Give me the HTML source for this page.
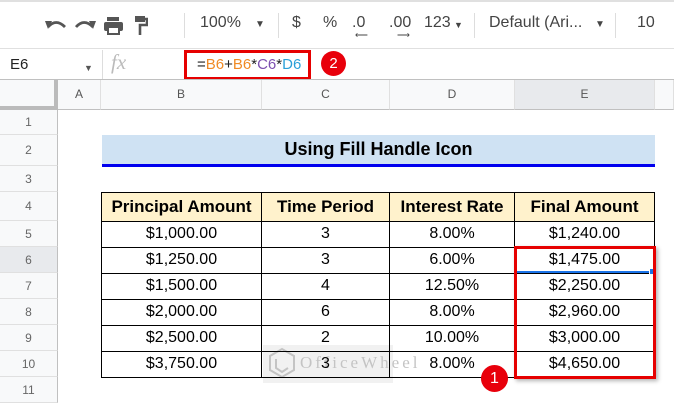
<!DOCTYPE html>
<html><head><meta charset="utf-8"><style>
*{margin:0;padding:0;box-sizing:border-box}
body{width:674px;height:403px;overflow:hidden;background:#fff;font-family:"Liberation Sans",Arial,sans-serif;position:relative}
.a{position:absolute}
.tb{color:#444;font-size:16px;top:14px}
.rh{position:absolute;left:0;width:58px;background:#f8f9fa;border-bottom:1px solid #e0e0e0;border-right:1px solid #c0c0c0;color:#666;font-size:12px;text-align:center}
.ch{position:absolute;top:80px;height:30px;background:#f8f9fa;border-right:1px solid #e0e0e0;border-bottom:1px solid #c0c0c0;color:#555;font-size:12px;text-align:center;line-height:29px}
.c{position:absolute;border-right:1.5px solid #000;border-bottom:1.5px solid #000;text-align:center;font-size:16px;color:#000;line-height:26px}
.hd{background:#fff2cc;font-weight:bold;font-size:17px;line-height:28px}
</style></head><body>
<div class="a" style="left:0;top:0;width:674px;height:2px;background:#e0e0e0"></div>
<!-- watermark (behind table) -->
<div class="a" style="left:263px;top:345px;width:130px;height:38px;background:rgba(235,235,235,0.7)"></div>
<svg class="a" style="left:268px;top:347px" width="28" height="32"><path d="M14 2 L26 9 L26 23 L14 30 L2 23 L2 9 Z" fill="none" stroke="#c4c4c4" stroke-width="2"/><path d="M8 12 L8 21 L14 25 L20 21" fill="none" stroke="#c4c4c4" stroke-width="2"/></svg>
<div class="a" style="left:300px;top:353px;font-size:17px;font-family:'Liberation Serif',serif;letter-spacing:3px;color:#c4c4c4">OfficeWheel</div>
<!-- toolbar -->
<svg class="a" style="left:44px;top:14px" width="104" height="24" viewBox="0 0 104 24">
<path d="M4 13 Q12 4 21 13" fill="none" stroke="#555" stroke-width="2.8"/><path d="M1 7 L8 7 L4 15 Z" fill="#555"/>
<path d="M32 13 Q40 4 49 13" fill="none" stroke="#555" stroke-width="2.8"/><path d="M52 7 L45 7 L49 15 Z" fill="#555"/>
<rect x="63" y="3" width="12" height="4" fill="#555"/><rect x="60" y="8" width="19" height="9" rx="2" fill="#555"/><rect x="64" y="13" width="11" height="7" fill="#fff" stroke="#555" stroke-width="2"/>
<rect x="91" y="2" width="10" height="6" fill="#555"/><path d="M101 5 L103 5 L103 11 L96 11 L96 21" fill="none" stroke="#555" stroke-width="2.6"/>
</svg>
<div class="a" style="left:184px;top:13px;width:1px;height:25px;background:#ddd"></div>
<div class="a tb" style="left:200px">100%</div>
<div class="a tb" style="left:255px;font-size:10px;top:19px">▼</div>
<div class="a" style="left:278px;top:13px;width:1px;height:25px;background:#ddd"></div>
<div class="a tb" style="left:292px">$</div>
<div class="a tb" style="left:323px">%</div>
<div class="a tb" style="left:352px">.0</div>
<div class="a" style="left:355px;top:30px;font-size:9px;color:#444">⟵</div>
<div class="a tb" style="left:389px">.00</div>
<div class="a" style="left:397px;top:30px;font-size:9px;color:#444">⟶</div>
<div class="a tb" style="left:424px">123</div>
<div class="a tb" style="left:454px;font-size:9px;top:20px">▼</div>
<div class="a" style="left:474px;top:13px;width:1px;height:25px;background:#ddd"></div>
<div class="a tb" style="left:489px">Default (Ari...</div>
<div class="a tb" style="left:595px;font-size:10px;top:19px">▼</div>
<div class="a" style="left:615px;top:13px;width:1px;height:25px;background:#ddd"></div>
<div class="a tb" style="left:637px">10</div>
<div class="a" style="left:0;top:48px;width:674px;height:1px;background:#e0e0e0"></div>
<!-- formula bar -->
<div class="a" style="left:10px;top:56px;font-size:15px;color:#222">E6</div>
<div class="a" style="left:84px;top:63px;font-size:9px;color:#555">▼</div>
<div class="a" style="left:102px;top:50px;width:1px;height:30px;background:#ddd"></div>
<div class="a" style="left:111px;top:50px;font-size:21px;font-style:italic;font-family:'Liberation Serif',serif;color:#bbb">fx</div>
<div class="a" style="left:184px;top:50px;width:127px;height:30px;border:3px solid #e60000"></div>
<div class="a" style="left:197px;top:56px;font-size:15px;color:#222">=<span style="color:#f08a24">B6</span>+<span style="color:#f08a24">B6</span>*<span style="color:#7c4fb0">C6</span>*<span style="color:#2aa0d8">D6</span></div>
<div class="a" style="left:321px;top:51px;width:25px;height:25px;border-radius:50%;background:#e8000b;color:#fff;font-size:15px;text-align:center;line-height:25px">2</div>
<div class="a" style="left:0;top:79px;width:674px;height:1px;background:#c0c0c0"></div>
<!-- headers -->
<div class="a" style="left:0;top:80px;width:58px;height:30px;background:#f8f9fa;border-right:4px solid #bbb;border-bottom:4px solid #bbb"></div>
<div class="ch" style="left:58px;width:43px">A</div>
<div class="ch" style="left:101px;width:161px">B</div>
<div class="ch" style="left:262px;width:128px">C</div>
<div class="ch" style="left:390px;width:125px">D</div>
<div class="ch" style="left:515px;width:140px;background:#e8eaed">E</div>
<div class="ch" style="left:655px;width:19px"></div>
<div class="rh" style="top:110px;height:25px;line-height:25px">1</div>
<div class="rh" style="top:135px;height:31px;line-height:31px">2</div>
<div class="rh" style="top:166px;height:26px;line-height:26px">3</div>
<div class="rh" style="top:192px;height:29px;line-height:29px">4</div>
<div class="rh" style="top:221px;height:26px;line-height:26px">5</div>
<div class="rh" style="top:247px;height:26px;line-height:26px;background:#e8eaed">6</div>
<div class="rh" style="top:273px;height:26px;line-height:26px">7</div>
<div class="rh" style="top:299px;height:26px;line-height:26px">8</div>
<div class="rh" style="top:325px;height:26px;line-height:26px">9</div>
<div class="rh" style="top:351px;height:26px;line-height:26px">10</div>
<div class="rh" style="top:377px;height:26px;line-height:26px">11</div>
<!-- title -->
<div class="a" style="left:102px;top:135px;width:553px;height:29px;background:#cfe2f3;text-align:center;font-weight:bold;font-size:18px;line-height:29px">Using Fill Handle Icon</div>
<div class="a" style="left:102px;top:164px;width:553px;height:3px;background:#0000ee"></div>
<!-- table -->
<div class="a" style="left:101px;top:192px;width:554px;height:186px;border-left:1.5px solid #000;border-top:1.5px solid #000"></div>
<div id="t"></div>
<script>
var cols=[[102,160],[262,128],[390,125],[515,140]];
var rows=[["Principal Amount","Time Period","Interest Rate","Final Amount"],
["$1,000.00","3","8.00%","$1,240.00"],["$1,250.00","3","6.00%","$1,475.00"],["$1,500.00","4","12.50%","$2,250.00"],
["$2,000.00","6","8.00%","$2,960.00"],["$2,500.00","2","10.00%","$3,000.00"],["$3,750.00","3","8.00%","$4,650.00"]];
var ys=[193,221,247,273,299,325,351,377],h="";
for(var r=0;r<7;r++)for(var c=0;c<4;c++){h+='<div class="c'+(r==0?' hd':'')+'" style="left:'+cols[c][0]+'px;top:'+ys[r]+'px;width:'+cols[c][1]+'px;height:'+(ys[r+1]-ys[r]+1)+'px">'+rows[r][c]+'</div>';}
document.getElementById('t').outerHTML=h;
</script>
<!-- selection -->
<div class="a" style="left:516px;top:271px;width:137px;height:2px;background:#1a73e8"></div>
<div class="a" style="left:649px;top:268px;width:7px;height:7px;background:#1a73e8;border:1px solid #fff"></div>
<div class="a" style="left:514px;top:246px;width:142px;height:133px;border:3px solid #e60000;box-shadow:2px 2px 4px rgba(0,0,0,.3)"></div>
<div class="a" style="left:481px;top:365px;width:27px;height:27px;border-radius:50%;background:#e8000b;color:#fff;font-size:16px;text-align:center;line-height:27px">1</div>
</body></html>
